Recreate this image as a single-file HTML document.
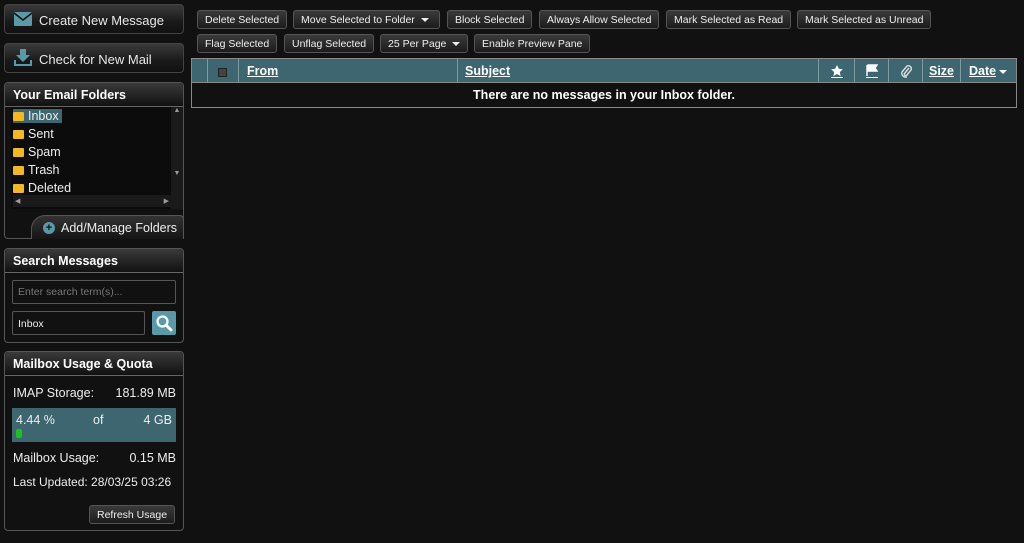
<!DOCTYPE html>
<html><head><meta charset="utf-8"><style>
*{box-sizing:border-box;margin:0;padding:0}
body{width:1024px;height:543px;background:#111;font-family:"Liberation Sans",Arial,sans-serif;color:#eee;position:relative;overflow:hidden}
.abs{position:absolute}
.bigbtn{position:absolute;left:4px;width:180px;height:30px;border:1px solid #444;border-radius:4px;background:linear-gradient(#3a3a3a,#1a1a1a 60%,#111);font-size:13px;color:#e8e8e8}
.bigbtn span{position:absolute;left:34px;top:8px}
.panel{position:absolute;left:4px;width:180px;border:1px solid #555;border-radius:4px;background:#111}
.ph{height:24px;background:linear-gradient(#3a3a3a,#111);border-bottom:1px solid #666;font-weight:bold;font-size:12.5px;padding:5px 0 0 8px;color:#fff;border-radius:4px 4px 0 0}
.btn{position:absolute;height:19px;border:1px solid #555;border-radius:3px;background:linear-gradient(#3a3a3a,#1c1c1c);font-size:10.5px;color:#eee;padding:3px 7px 0;white-space:nowrap}
.caret{display:inline-block;width:0;height:0;border-left:4px solid transparent;border-right:4px solid transparent;border-top:4px solid #eee;margin-left:6px;vertical-align:middle}
.fold{position:absolute;left:8px;font-size:12.5px;color:#eee}
.fi{display:inline-block;width:11px;height:9px;background:#f2b824;margin-right:4px;vertical-align:-1px;border-radius:1px}
.th{position:absolute;top:0;height:24px;border-left:1px solid #7a9aa0;font-weight:bold;font-size:12.5px;text-decoration:underline;color:#fff;padding-top:5px}
.row{position:absolute;left:8px;font-size:12.5px;color:#eee}
</style></head><body>

<div class="bigbtn" style="top:4px">
<svg class="abs" style="left:9px;top:7px" width="18" height="14" viewBox="0 0 18 14"><rect width="18" height="14" rx="1" fill="#5a9aa8"/><path d="M0 1 L9 8 L18 1" stroke="#111" stroke-width="1.5" fill="none"/></svg>
<span>Create New Message</span></div>
<div class="bigbtn" style="top:43px">
<svg class="abs" style="left:9px;top:5px" width="18" height="18" viewBox="0 0 18 18"><path d="M6 0h6v6h4l-7 7-7-7h4z" fill="#5a9aa8"/><path d="M0 11v6h18v-6h-2v4H2v-4z" fill="#5a9aa8"/></svg>
<span>Check for New Mail</span></div>

<div class="panel" style="top:82px;height:157px">
<div class="ph">Your Email Folders</div>
<div class="abs" style="left:6px;top:24px;width:172px;height:102px;background:#0c0c0c"></div>
<div class="abs" style="left:166px;top:24px;width:12px;height:102px;background:#1a1a1a;font-size:7px;color:#999;text-align:center">▲<br><br><br><br><br><br><br><br><br>▼</div>
<div class="abs" style="left:8px;top:112px;width:158px;height:12px;background:#1a1a1a;font-size:7px;color:#999;padding-top:2px">&nbsp;◀<span style="float:right">▶&nbsp;</span></div>
<div class="fold" style="top:26px;background:#3d6670;padding:0 3px 0 0"><span class="fi"></span>Inbox</div>
<div class="fold" style="top:44px"><span class="fi"></span>Sent</div>
<div class="fold" style="top:62px"><span class="fi"></span>Spam</div>
<div class="fold" style="top:80px"><span class="fi"></span>Trash</div>
<div class="fold" style="top:98px"><span class="fi"></span>Deleted</div>
<div class="abs" style="left:26px;top:132px;width:153px;height:24px;border:1px solid #555;border-bottom:none;border-radius:14px 4px 0 0;background:linear-gradient(#333,#151515);font-size:12.5px;padding:5px 0 0 29px">Add/Manage Folders</div>
<div class="abs" style="left:38px;top:139px;width:12px;height:12px;border-radius:50%;background:#5a9aa8;color:#111;font-size:11px;line-height:12px;text-align:center;font-weight:bold">+</div>
</div>

<div class="panel" style="top:248px;height:95px">
<div class="ph">Search Messages</div>
<div class="abs" style="left:7px;top:31px;width:164px;height:24px;border:1px solid #555;border-radius:2px;font-size:10.5px;color:#777;padding:5px 0 0 5px">Enter search term(s)...</div>
<div class="abs" style="left:7px;top:62px;width:133px;height:24px;border:1px solid #555;border-radius:2px;font-size:10.5px;color:#eee;padding:6px 0 0 5px">Inbox</div>
<div class="abs" style="left:147px;top:62px;width:24px;height:24px;background:#5a9aa8;border-radius:2px">
<svg width="24" height="24" viewBox="0 0 24 24"><circle cx="10.5" cy="10.5" r="5" stroke="#fff" stroke-width="2.2" fill="none"/><path d="M14 14l5 5" stroke="#fff" stroke-width="3" stroke-linecap="round"/></svg></div>
</div>

<div class="panel" style="top:351px;height:180px">
<div class="ph">Mailbox Usage &amp; Quota</div>
<div class="row" style="top:34px">IMAP Storage:</div><div class="abs" style="right:7px;top:34px;font-size:12.5px">181.89 MB</div>
<div class="abs" style="left:7px;top:56px;width:164px;height:34px;background:#3d6670;font-size:12.5px;padding:5px 4px">4.44 %<span class="abs" style="left:81px;top:5px">of</span><span style="float:right">4 GB</span>
<div class="abs" style="left:4px;top:21px;width:6px;height:9px;background:#1ec01e;border-radius:2px"></div></div>
<div class="row" style="top:99px">Mailbox Usage:</div><div class="abs" style="right:7px;top:99px;font-size:12.5px">0.15 MB</div>
<div class="row" style="top:123px;font-size:12px">Last Updated: 28/03/25 03:26</div>
<div class="btn" style="left:84px;top:153px;height:19px;font-size:10.5px;padding:3px 7px 0">Refresh Usage</div>
</div>

<div class="btn" style="left:197px;top:10px">Delete Selected</div>
<div class="btn" style="left:293px;top:10px;width:147px">Move Selected to Folder<span class="caret"></span></div>
<div class="btn" style="left:447px;top:10px">Block Selected</div>
<div class="btn" style="left:539px;top:10px">Always Allow Selected</div>
<div class="btn" style="left:666px;top:10px">Mark Selected as Read</div>
<div class="btn" style="left:797px;top:10px">Mark Selected as Unread</div>
<div class="btn" style="left:197px;top:34px">Flag Selected</div>
<div class="btn" style="left:284px;top:34px">Unflag Selected</div>
<div class="btn" style="left:380px;top:34px">25 Per Page<span class="caret"></span></div>
<div class="btn" style="left:474px;top:34px">Enable Preview Pane</div>

<div class="abs" style="left:191px;top:58px;width:826px;height:50px;border:1px solid #888">
<div class="abs" style="left:0;top:0;width:824px;height:24px;background:#3d6670;border-bottom:1px solid #888"></div>
<div class="th" style="left:15px;width:32px;text-decoration:none"><div style="margin:4px 0 0 10px;width:9px;height:9px;background:#444;border:1px solid #222"></div></div>
<div class="th" style="left:46px;width:220px;padding-left:8px">From</div>
<div class="th" style="left:265px;width:361px;padding-left:7px">Subject</div>
<div class="th" style="left:626px;width:36px;text-align:center;text-decoration:none"><svg width="14" height="14" viewBox="0 0 14 14"><path d="M7 1l1.8 3.8 4 .5-3 2.8.8 4L7 10l-3.6 2.1.8-4-3-2.8 4-.5z" fill="#fff"/><rect x="1" y="13" width="12" height="1" fill="#fff"/></svg></div>
<div class="th" style="left:662px;width:34px;text-align:center;text-decoration:none"><svg width="12" height="14" viewBox="0 0 12 14"><path d="M1 1v11M2 1h9l-2 3 2 3H2z" stroke="#fff" stroke-width="1.4" fill="#fff"/><rect x="0" y="13" width="12" height="1" fill="#fff"/></svg></div>
<div class="th" style="left:696px;width:34px;text-align:center;text-decoration:none"><svg width="12" height="14" viewBox="0 0 12 14"><path d="M9 4L4.5 9.5a1.5 1.5 0 0 0 2 2L11 6a3 3 0 0 0-4-4L2 8a4 4 0 0 0 5 5" stroke="#ddd" stroke-width="1.4" fill="none"/></svg></div>
<div class="th" style="left:730px;width:38px;text-align:center">Size</div>
<div class="th" style="left:768px;width:56px;padding-left:8px">Date<span class="caret" style="margin-left:3px;border-top-color:#fff"></span></div>
<div class="abs" style="left:0;top:29px;width:824px;text-align:center;font-weight:bold;font-size:12.5px;color:#fff">There are no messages in your Inbox folder.</div>
</div>
</body></html>
